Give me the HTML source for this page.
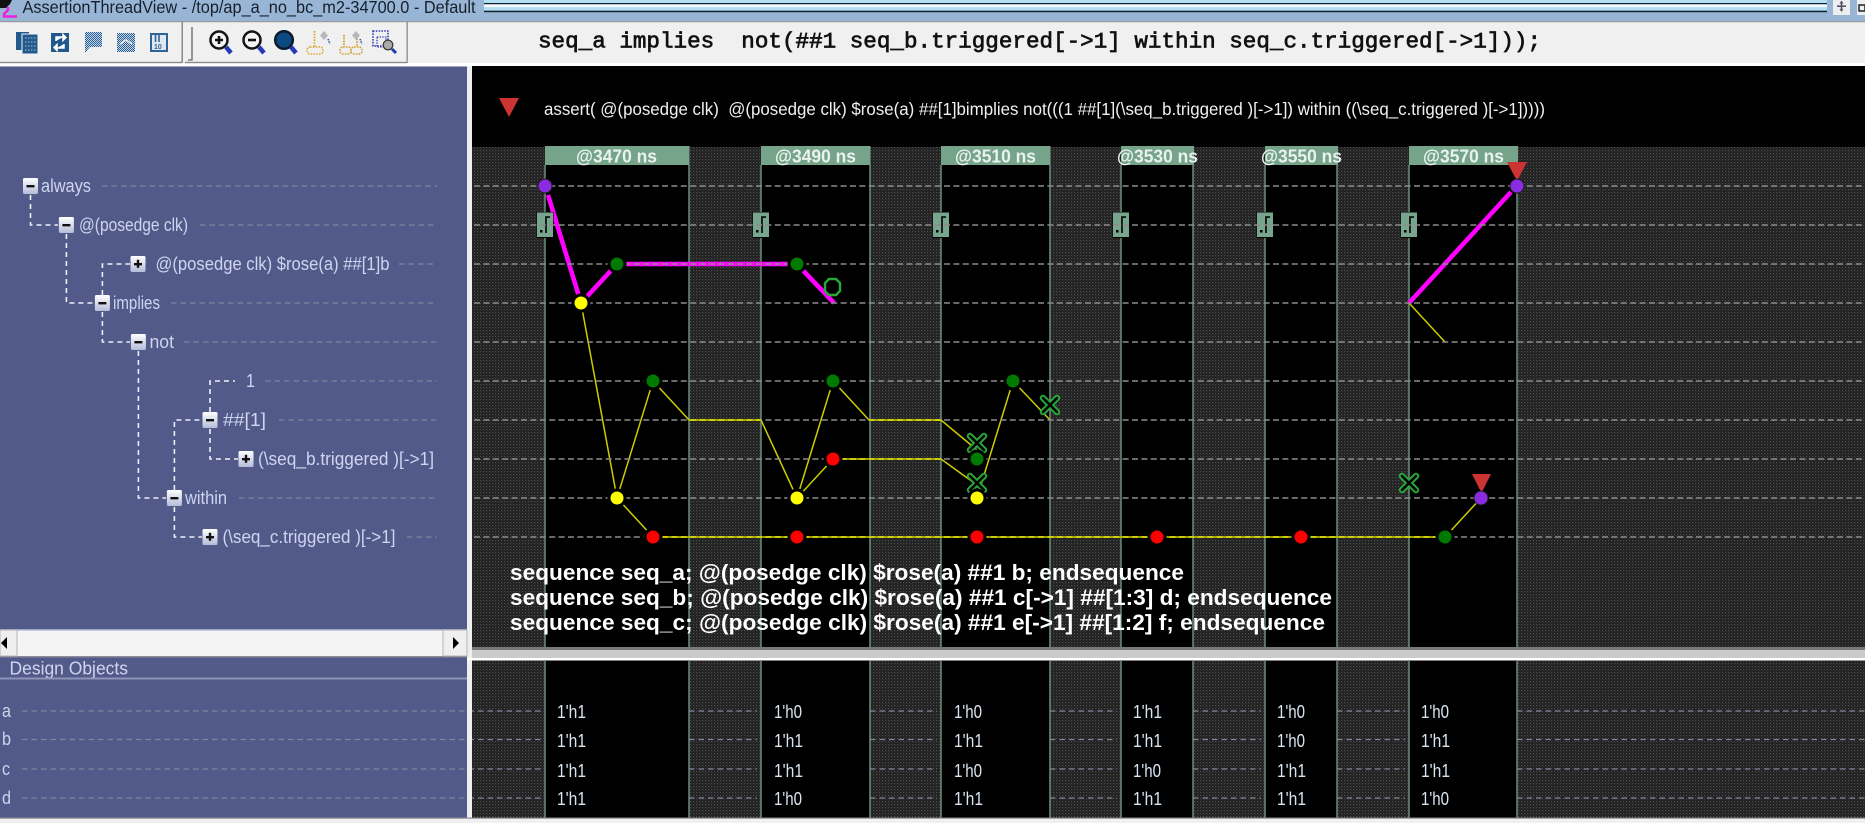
<!DOCTYPE html>
<html lang="en">
<head>
<meta charset="utf-8">
<title>AssertionThreadView</title>
<style>
html,body{margin:0;padding:0;background:#f0f0f0;width:1865px;height:823px;overflow:hidden}
svg{display:block}
text{font-family:"Liberation Sans",sans-serif;white-space:pre}
.t{fill:#cdd5ef;font-size:18px}
.h{fill:#eaf2ee;font-size:18px;font-weight:bold}
.v{fill:#d8e4f0;font-size:18px}
.s{fill:#fff;font-size:22px;font-weight:bold}
</style>
</head>
<body>
<svg xmlns="http://www.w3.org/2000/svg" width="1865" height="823" viewBox="0 0 1865 823">
<defs>
<pattern id="tx" width="3" height="3" patternUnits="userSpaceOnUse">
<rect width="3" height="3" fill="#1e1e1e"/><rect x="0" y="0" width="1.2" height="1.2" fill="#505050"/><rect x="1.5" y="1.5" width="1" height="1" fill="#404040"/>
</pattern>
<pattern id="bd" width="2" height="2" patternUnits="userSpaceOnUse">
<rect width="2" height="2" fill="#c4d4e4"/><rect width="1" height="1" fill="#2a5f94"/><rect x="1" y="1" width="1" height="1" fill="#2a5f94"/>
</pattern>
<linearGradient id="bx" x1="0" y1="0" x2="0" y2="1"><stop offset="0" stop-color="#fff"/><stop offset="1" stop-color="#b4bcd8"/></linearGradient>
<g id="minus"><rect x="-7.5" y="-8" width="15" height="16" rx="1.5" fill="url(#bx)"/><rect x="-4" y="-1" width="8" height="2.4" fill="#111"/></g>
<g id="plus"><rect x="-7.5" y="-8" width="15" height="16" rx="1.5" fill="url(#bx)"/><rect x="-4" y="-1" width="8" height="2.4" fill="#111"/><rect x="-1.2" y="-4.2" width="2.4" height="8" fill="#111"/></g>
<g id="clk"><rect x="-8.5" y="-13" width="17" height="26" fill="#000"/><rect x="-8" y="-12.5" width="16" height="24.5" fill="#78a58e"/><path d="M1 8V-8H5" fill="none" stroke="#000" stroke-width="1.6"/><rect x="-5" y="5" width="2.5" height="2.5" fill="#000"/></g>
<g id="xm"><path d="M-7-7 7 7M-7 7 7-7" stroke="#27a838" stroke-width="6.5" stroke-linecap="round"/><path d="M-7-7 7 7M-7 7 7-7" stroke="#000" stroke-width="2.6" stroke-linecap="round"/></g>
<clipPath id="yc"><rect x="689" y="418" width="72" height="4"/><rect x="869" y="418" width="72" height="4"/><rect x="841" y="457" width="100" height="4"/><rect x="660" y="535" width="785" height="4"/></clipPath>
</defs>

<!-- title bar -->
<rect width="1865" height="21" fill="#98b5d5"/>
<path d="M0 0H12L10 4 6 8H0Z" fill="#111"/>
<path d="M8 7V10L4 14V16.5H17" fill="none" stroke="#f01ee0" stroke-width="2.4"/>
<text x="22.5" y="13" font-size="17.5" fill="#16202c" textLength="453" lengthAdjust="spacingAndGlyphs">AssertionThreadView - /top/ap_a_no_bc_m2-34700.0 - Default</text>
<rect x="484" y="0" width="1343" height="3" fill="#b2e0f2"/>
<rect x="484" y="3" width="1343" height="1.3" fill="#12202e"/>
<rect x="484" y="4.3" width="1343" height="3" fill="#f2f8fb"/>
<rect x="484" y="7.3" width="1343" height="3.4" fill="#b2e0f2"/>
<rect x="484" y="10.7" width="1343" height="1.5" fill="#12202e"/>
<rect x="1833" y="0" width="17" height="15" fill="#eceef0"/>
<path d="M1841.5 1.5V11M1837 6.2H1846" stroke="#556" stroke-width="1.6"/>
<path d="M1840 3.5 1841.5 1.5 1843 3.5M1840 9 1841.5 11 1843 9" fill="none" stroke="#556" stroke-width="1"/>
<rect x="1857" y="0" width="8" height="15" fill="#eceef0"/>
<rect x="1859" y="5" width="6" height="6" fill="none" stroke="#222" stroke-width="1.5"/>

<!-- toolbar -->
<rect x="0" y="21" width="1865" height="42" fill="#f0f0f0"/>
<rect x="0" y="21" width="1865" height="1.2" fill="#9a9a9a"/>
<rect x="0" y="63" width="1865" height="3" fill="#fff"/>
<rect x="0" y="61.8" width="182" height="1.4" fill="#8a8a8a"/>
<rect x="185" y="61.8" width="222" height="1.4" fill="#8a8a8a"/>
<rect x="181.5" y="22" width="1.5" height="41" fill="#8a8a8a"/>
<rect x="406.5" y="22" width="1.3" height="41" fill="#8a8a8a"/>
<path d="M192 27V60H188" fill="none" stroke="#666" stroke-width="1.3"/>

<!-- icon1 -->
<rect x="16" y="32" width="13" height="18" fill="#22598c"/>
<rect x="22" y="34" width="16" height="20" fill="#22598c" stroke="#f4f4f4" stroke-width="1"/>
<path d="M25 38H36M25 42H36M25 46H36M25 50H36" stroke="#8fb0cc" stroke-width="1.2" stroke-dasharray="1.5 1.5"/>
<!-- icon2 -->
<rect x="51" y="33" width="18" height="19" fill="#22598c"/>
<path d="M56 41 56 37H63M63 37V34.5L66 37.5 63 40.5V37M64 44V48H57M57 48V50.5L54 47.5 57 44.5V48" fill="#fff" stroke="#fff" stroke-width="1.5"/>
<!-- icon3 -->
<path d="M85 32H102V47H90L85 53Z" fill="url(#bd)"/>
<!-- icon4 -->
<rect x="117" y="33" width="18" height="19" fill="url(#bd)"/>
<path d="M120 44 126 40 132 44" fill="none" stroke="#f0f0f0" stroke-width="1.5"/>
<!-- icon5 -->
<rect x="150" y="33" width="18" height="19" fill="#2f6496"/>
<rect x="152" y="35" width="14" height="15" fill="#dfe8f0"/>
<path d="M155.5 35V42M159 35V42" stroke="#2f6496" stroke-width="1.6"/>
<text x="154" y="49" font-size="7" fill="#2f6496" font-weight="bold">10</text>
<!-- zoom icons -->
<circle cx="219" cy="40" r="8.5" fill="#f4f4f4" stroke="#141414" stroke-width="2.5"/>
<path d="M215 40H223M219 36V44" stroke="#111" stroke-width="2.6"/>
<path d="M226 47 231 53" stroke="#2438b8" stroke-width="4.5"/>
<circle cx="252" cy="40" r="8.5" fill="#f4f4f4" stroke="#141414" stroke-width="2.5"/>
<path d="M248 40H256" stroke="#111" stroke-width="2.6"/>
<path d="M259 47 264 53" stroke="#2438b8" stroke-width="4.5"/>
<circle cx="284" cy="40" r="8.8" fill="#0e4a82" stroke="#0a1a2c" stroke-width="2.5"/>
<path d="M291 47 296 53" stroke="#2438b8" stroke-width="4.5"/>
<!-- icon -->
<path d="M314.5 31V47" stroke="#dca830" stroke-width="1.8" stroke-dasharray="1.6 1.2"/>
<rect x="307" y="47" width="16" height="7" rx="3" fill="none" stroke="#dca830" stroke-width="1.6" stroke-dasharray="1.6 1.2"/>
<path d="M324 31 328 35.5 324 40 320 35.5Z" fill="#b8b8b8"/>
<path d="M328 39 330 44" stroke="#3040c0" stroke-width="1.5" stroke-dasharray="1.5 1"/>
<!-- icon -->
<path d="M344 35V47M357 33V47" stroke="#d0a030" stroke-width="1.8" stroke-dasharray="1.6 1.2"/>
<rect x="340" y="47" width="11" height="7" rx="3" fill="none" stroke="#d0a030" stroke-width="1.6" stroke-dasharray="1.6 1.2"/>
<rect x="351" y="47" width="11" height="7" rx="3" fill="none" stroke="#d0a030" stroke-width="1.6" stroke-dasharray="1.6 1.2"/>
<path d="M356 31 360 35.5 356 40 352 35.5Z" fill="#b8b8b8"/>
<path d="M360 39 362 44" stroke="#3040c0" stroke-width="1.5" stroke-dasharray="1.5 1"/>
<!-- icon -->
<rect x="373" y="31" width="15" height="15" fill="none" stroke="#3a40b0" stroke-width="1.6" stroke-dasharray="1.6 1.2"/>
<rect x="377" y="37" width="9" height="10" fill="none" stroke="#3a40b0" stroke-width="1.3" stroke-dasharray="1.4 1.2"/>
<circle cx="388" cy="45" r="4.8" fill="#aaa" stroke="#333" stroke-width="1.2"/>
<path d="M392 49 396 53" stroke="#2438b8" stroke-width="3"/>

<text x="538" y="47.5" style="font-family:'Liberation Mono',monospace;stroke:#111;stroke-width:0.7" font-size="22.6" fill="#111" textLength="1003" lengthAdjust="spacingAndGlyphs">seq_a implies  not(##1 seq_b.triggered[-&gt;1] within seq_c.triggered[-&gt;1]));</text>

<!-- left panel -->
<rect x="0" y="66.5" width="467" height="751.5" fill="#525a8a"/>
<rect x="0" y="818" width="1865" height="5" fill="#f0f0f0"/>

<!-- right panel upper -->
<rect x="472" y="66" width="1393" height="581" fill="#000"/>
<rect x="472" y="147" width="1393" height="500" fill="url(#tx)"/>
<rect x="545" y="165" width="144" height="482" fill="#000"/>
<rect x="761" y="165" width="109" height="482" fill="#000"/>
<rect x="941" y="165" width="109" height="482" fill="#000"/>
<rect x="1121" y="165" width="72" height="482" fill="#000"/>
<rect x="1265" y="165" width="72" height="482" fill="#000"/>
<rect x="1409" y="165" width="108" height="482" fill="#000"/>

<!-- lower -->
<rect x="472" y="647" width="1393" height="3" fill="#7a7a7a"/>
<rect x="472" y="650" width="1393" height="8" fill="#cbcbcb"/>
<rect x="472" y="660.5" width="1393" height="157.5" fill="url(#tx)"/>
<rect x="545" y="660.5" width="144" height="157.5" fill="#000"/>
<rect x="761" y="660.5" width="109" height="157.5" fill="#000"/>
<rect x="941" y="660.5" width="109" height="157.5" fill="#000"/>
<rect x="1121" y="660.5" width="72" height="157.5" fill="#000"/>
<rect x="1265" y="660.5" width="72" height="157.5" fill="#000"/>
<rect x="1409" y="660.5" width="108" height="157.5" fill="#000"/>

<!-- column lines -->
<g stroke="#6f9a86" stroke-width="1.4">
<path d="M545 165V647M689 165V647M761 165V647M870 165V647M941 165V647M1050 165V647M1121 165V647M1193 165V647M1265 165V647M1337 165V647M1409 165V647M1517 165V647"/>
<path d="M545 661V818M689 661V818M761 661V818M870 661V818M941 661V818M1050 661V818M1121 661V818M1193 661V818M1265 661V818M1337 661V818M1409 661V818M1517 661V818"/>
</g>

<!-- headers -->
<g fill="#76a48b">
<rect x="545" y="146" width="144.5" height="19"/>
<rect x="761" y="146" width="109.5" height="19"/>
<rect x="941" y="146" width="109.5" height="19"/>
<rect x="1121" y="146" width="73" height="19"/>
<rect x="1265" y="146" width="73" height="19"/>
<rect x="1409" y="146" width="109" height="19"/>
</g>
<text class="h" x="576" y="162.5" textLength="81" lengthAdjust="spacingAndGlyphs">@3470 ns</text>
<text class="h" x="775" y="162.5" textLength="81" lengthAdjust="spacingAndGlyphs">@3490 ns</text>
<text class="h" x="955" y="162.5" textLength="81" lengthAdjust="spacingAndGlyphs">@3510 ns</text>
<text class="h" x="1117" y="162.5" textLength="81" lengthAdjust="spacingAndGlyphs">@3530 ns</text>
<text class="h" x="1261" y="162.5" textLength="81" lengthAdjust="spacingAndGlyphs">@3550 ns</text>
<text class="h" x="1423" y="162.5" textLength="81" lengthAdjust="spacingAndGlyphs">@3570 ns</text>

<!-- assert -->
<path d="M499 98H519L509 117Z" fill="#cc3333"/>
<text x="544" y="115" font-size="17.5" fill="#f0f0f0" textLength="1001" lengthAdjust="spacingAndGlyphs">assert( @(posedge clk)  @(posedge clk) $rose(a) ##[1]bimplies not(((1 ##[1](\seq_b.triggered )[-&gt;1]) within ((\seq_c.triggered )[-&gt;1]))))</text>

<!-- traces yellow -->
<g fill="none" stroke="#cccc00" stroke-width="1.5">
<path d="M581 303 617 498 653 381 689 420H761L797 498 833 381 869 420H941L977 450"/>
<path d="M797 498 833 459H941L977 485"/>
<path d="M977 498 1013 381 1050 420"/>
<path d="M617 498 653 537H1445L1481 498"/>
<path d="M1409 303 1445 342"/>
</g>
<!-- traces magenta -->
<g fill="none" stroke="#ff00ff" stroke-width="4.6">
<path d="M548 195 581 303 617 264H797L834 303"/>
<path d="M1409 303 1511 192"/>
</g>

<!-- clocks -->
<use href="#clk" x="545" y="225"/>
<use href="#clk" x="761" y="225"/>
<use href="#clk" x="941" y="225"/>
<use href="#clk" x="1121" y="225"/>
<use href="#clk" x="1265" y="225"/>
<use href="#clk" x="1409" y="225"/>

<!-- row dashes upper -->
<g stroke="#8c8c8c" stroke-width="1.4" stroke-dasharray="6 3.4" fill="none">
<path d="M474 186H1865M474 225H1865M474 264H1865M474 303H1865M474 342H1865M474 381H1865M474 420H1865M474 459H1865M474 498H1865M474 537H1865"/>
</g>
<!-- yellow dashes above gray -->
<g stroke="#d8d800" stroke-width="1.8" stroke-dasharray="6 3.4" fill="none" clip-path="url(#yc)">
<path d="M474 420H1865M474 459H1865M474 537H1865"/>
</g>
<!-- left dashes -->
<g stroke="#81849a" stroke-width="1.3" stroke-dasharray="5.5 4" fill="none">
<path d="M102 186H437M200 225H437M399 264H437M171 303H437M184 342H437M265 381H437M279 420H437M239 498H437M407 537H437"/>
<path d="M22 711H541M22 739.5H541M22 769H541M22 798H541"/>
<path d="M689 711H757M870 711H937M1050 711H1117M1193 711H1261M1337 711H1405M1517 711H1865"/>
<path d="M689 739.5H757M870 739.5H937M1050 739.5H1117M1193 739.5H1261M1337 739.5H1405M1517 739.5H1865"/>
<path d="M689 769H757M870 769H937M1050 769H1117M1193 769H1261M1337 769H1405M1517 769H1865"/>
<path d="M689 798H757M870 798H937M1050 798H1117M1193 798H1261M1337 798H1405M1517 798H1865"/>
</g>

<!-- white gap over dashes -->
<rect x="467" y="66" width="5" height="752" fill="#eef0f0"/>
<rect x="467" y="658" width="1398" height="2.5" fill="#fff"/>

<!-- markers -->
<path d="M829 279H836L840 283V291L836 295H829L825 291V283Z" fill="none" stroke="#27a838" stroke-width="2.4"/>
<use href="#xm" x="1050" y="405"/>
<use href="#xm" x="977" y="443"/>
<use href="#xm" x="977" y="483"/>
<use href="#xm" x="1409" y="483"/>

<!-- nodes -->
<g stroke="#000" stroke-width="3">
<circle cx="581" cy="303" r="8" fill="#ffff00"/>
<circle cx="617" cy="264" r="8" fill="#007a00"/>
<circle cx="797" cy="264" r="8" fill="#007a00"/>
<circle cx="653" cy="381" r="8" fill="#007a00"/>
<circle cx="833" cy="381" r="8" fill="#007a00"/>
<circle cx="1013" cy="381" r="8" fill="#007a00"/>
<circle cx="833" cy="459" r="8" fill="#ff0000"/>
<circle cx="977" cy="459" r="8" fill="#007a00"/>
<circle cx="617" cy="498" r="8" fill="#ffff00"/>
<circle cx="797" cy="498" r="8" fill="#ffff00"/>
<circle cx="977" cy="498" r="8" fill="#ffff00"/>
<circle cx="653" cy="537" r="8" fill="#ff0000"/>
<circle cx="797" cy="537" r="8" fill="#ff0000"/>
<circle cx="977" cy="537" r="8" fill="#ff0000"/>
<circle cx="1157" cy="537" r="8" fill="#ff0000"/>
<circle cx="1301" cy="537" r="8" fill="#ff0000"/>
<circle cx="1445" cy="537" r="8" fill="#007a00"/>
</g>
<path d="M1507 162H1527L1517 181Z" fill="#cc3333"/>
<path d="M1472 474H1491L1481.5 493Z" fill="#cc3333"/>
<g stroke="#1a1a1a" stroke-width="1">
<circle cx="545" cy="186" r="7" fill="#8a2be2"/>
<circle cx="1517" cy="186" r="7" fill="#8a2be2"/>
<circle cx="1481" cy="498" r="7" fill="#8a2be2"/>
</g>

<!-- sequence text -->
<text class="s" x="510" y="580" textLength="674" lengthAdjust="spacingAndGlyphs">sequence seq_a; @(posedge clk) $rose(a) ##1 b; endsequence</text>
<text class="s" x="510" y="605" textLength="822" lengthAdjust="spacingAndGlyphs">sequence seq_b; @(posedge clk) $rose(a) ##1 c[-&gt;1] ##[1:3] d; endsequence</text>
<text class="s" x="510" y="630" textLength="815" lengthAdjust="spacingAndGlyphs">sequence seq_c; @(posedge clk) $rose(a) ##1 e[-&gt;1] ##[1:2] f; endsequence</text>

<!-- tree lines -->
<g fill="none" stroke="#eef0f8" stroke-width="1.6" stroke-dasharray="5 4">
<path d="M30.5 195V225H58"/>
<path d="M66.4 234V303H94"/>
<path d="M102.4 295V264H130"/>
<path d="M102.4 312V342H130"/>
<path d="M138.4 351V498H166"/>
<path d="M174.4 490V420H202"/>
<path d="M210 412V381H235"/>
<path d="M210 429V459H238"/>
<path d="M174.4 507V537H202"/>
</g>
<use href="#minus" x="30.5" y="186"/>
<use href="#minus" x="66.4" y="225"/>
<use href="#plus" x="138" y="264"/>
<use href="#minus" x="102.4" y="303"/>
<use href="#minus" x="138.4" y="342"/>
<use href="#minus" x="210" y="420"/>
<use href="#plus" x="246" y="459"/>
<use href="#minus" x="174.4" y="498"/>
<use href="#plus" x="210" y="537"/>

<text class="t" x="41" y="192" textLength="50" lengthAdjust="spacingAndGlyphs">always</text>
<text class="t" x="79" y="231" textLength="109" lengthAdjust="spacingAndGlyphs">@(posedge clk)</text>
<text class="t" x="155.5" y="270" textLength="234" lengthAdjust="spacingAndGlyphs">@(posedge clk) $rose(a) ##[1]b</text>
<text class="t" x="113" y="309" textLength="47" lengthAdjust="spacingAndGlyphs">implies</text>
<text class="t" x="149.5" y="348" textLength="24.5" lengthAdjust="spacingAndGlyphs">not</text>
<text class="t" x="246" y="387" textLength="9" lengthAdjust="spacingAndGlyphs">1</text>
<text class="t" x="223" y="426" textLength="43" lengthAdjust="spacingAndGlyphs">##[1]</text>
<text class="t" x="258" y="465" textLength="176" lengthAdjust="spacingAndGlyphs">(\seq_b.triggered )[-&gt;1]</text>
<text class="t" x="185" y="504" textLength="42" lengthAdjust="spacingAndGlyphs">within</text>
<text class="t" x="222.5" y="543" textLength="173" lengthAdjust="spacingAndGlyphs">(\seq_c.triggered )[-&gt;1]</text>

<!-- scrollbar -->
<rect x="0" y="630" width="467" height="27" fill="#f4f4f4"/>
<rect x="0" y="629" width="467" height="1.5" fill="#9ea3c4"/>
<rect x="0" y="656" width="467" height="1.5" fill="#8a8a98"/>
<rect x="0" y="630" width="17" height="26" fill="#efefef" stroke="#a8a8a8" stroke-width="0.8"/>
<rect x="443" y="630" width="24" height="26" fill="#efefef" stroke="#a8a8a8" stroke-width="0.8"/>
<path d="M7 637V649L1 643Z" fill="#000"/>
<path d="M453 637V649L459 643Z" fill="#000"/>

<!-- design objects -->
<text class="t" x="9.5" y="674.5" textLength="118.5" lengthAdjust="spacingAndGlyphs">Design Objects</text>
<rect x="0" y="677.5" width="467" height="2" fill="#8e94b8"/>
<text class="t" x="2" y="717" textLength="9" lengthAdjust="spacingAndGlyphs">a</text>
<text class="t" x="2" y="745" textLength="9" lengthAdjust="spacingAndGlyphs">b</text>
<text class="t" x="2" y="775" textLength="8" lengthAdjust="spacingAndGlyphs">c</text>
<text class="t" x="2" y="804" textLength="9" lengthAdjust="spacingAndGlyphs">d</text>

<!-- values -->
<text class="v" x="557" y="718" textLength="29" lengthAdjust="spacingAndGlyphs">1'h1</text>
<text class="v" x="774" y="718" textLength="28" lengthAdjust="spacingAndGlyphs">1'h0</text>
<text class="v" x="954" y="718" textLength="28" lengthAdjust="spacingAndGlyphs">1'h0</text>
<text class="v" x="1133" y="718" textLength="29" lengthAdjust="spacingAndGlyphs">1'h1</text>
<text class="v" x="1277" y="718" textLength="28" lengthAdjust="spacingAndGlyphs">1'h0</text>
<text class="v" x="1421" y="718" textLength="28" lengthAdjust="spacingAndGlyphs">1'h0</text>

<text class="v" x="557" y="747" textLength="29" lengthAdjust="spacingAndGlyphs">1'h1</text>
<text class="v" x="774" y="747" textLength="29" lengthAdjust="spacingAndGlyphs">1'h1</text>
<text class="v" x="954" y="747" textLength="29" lengthAdjust="spacingAndGlyphs">1'h1</text>
<text class="v" x="1133" y="747" textLength="29" lengthAdjust="spacingAndGlyphs">1'h1</text>
<text class="v" x="1277" y="747" textLength="28" lengthAdjust="spacingAndGlyphs">1'h0</text>
<text class="v" x="1421" y="747" textLength="29" lengthAdjust="spacingAndGlyphs">1'h1</text>

<text class="v" x="557" y="777" textLength="29" lengthAdjust="spacingAndGlyphs">1'h1</text>
<text class="v" x="774" y="777" textLength="29" lengthAdjust="spacingAndGlyphs">1'h1</text>
<text class="v" x="954" y="777" textLength="28" lengthAdjust="spacingAndGlyphs">1'h0</text>
<text class="v" x="1133" y="777" textLength="28" lengthAdjust="spacingAndGlyphs">1'h0</text>
<text class="v" x="1277" y="777" textLength="29" lengthAdjust="spacingAndGlyphs">1'h1</text>
<text class="v" x="1421" y="777" textLength="29" lengthAdjust="spacingAndGlyphs">1'h1</text>

<text class="v" x="557" y="805" textLength="29" lengthAdjust="spacingAndGlyphs">1'h1</text>
<text class="v" x="774" y="805" textLength="28" lengthAdjust="spacingAndGlyphs">1'h0</text>
<text class="v" x="954" y="805" textLength="29" lengthAdjust="spacingAndGlyphs">1'h1</text>
<text class="v" x="1133" y="805" textLength="29" lengthAdjust="spacingAndGlyphs">1'h1</text>
<text class="v" x="1277" y="805" textLength="29" lengthAdjust="spacingAndGlyphs">1'h1</text>
<text class="v" x="1421" y="805" textLength="28" lengthAdjust="spacingAndGlyphs">1'h0</text>

<!-- bottom edge ticks -->
<rect x="0" y="817.5" width="1865" height="1.2" fill="#8a8a8a"/>
</svg>
</body>
</html>
